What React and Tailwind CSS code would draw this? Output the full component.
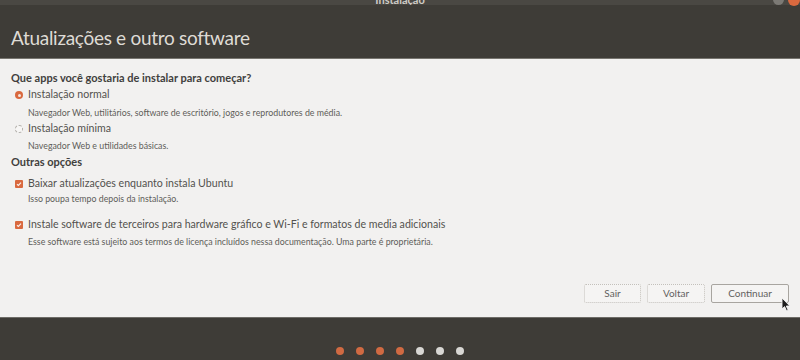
import React from "react";

const font = { fontFamily: "Lato, 'Noto Sans', sans-serif" };

function Radio({ checked }) {
  return checked ? (
    <span className="w-[8px] h-[8px] rounded-full bg-[#d9693f] flex items-center justify-center shrink-0">
      <span className="w-[3px] h-[3px] rounded-full bg-[#f6e6de]" />
    </span>
  ) : (
    <span className="w-[8px] h-[8px] rounded-full border border-dashed border-[#b3b0ab] bg-[#f7f6f5] shrink-0" />
  );
}

function Check() {
  return (
    <span className="w-[8px] h-[8px] rounded-[1px] bg-[#d9693f] flex items-center justify-center shrink-0">
      <svg width="6" height="6" viewBox="0 0 6 6">
        <path d="M1 3.2 L2.4 4.5 L5 1.6" stroke="#fbeee8" strokeWidth="1.2" fill="none" />
      </svg>
    </span>
  );
}

function Btn({ w, label, strong }) {
  return (
    <button
      className={
        "h-[19px] rounded-[2px] border bg-[#f5f4f3] text-[10px] text-[#63625f] flex items-center justify-center " +
        (strong ? "border-[#a8a5a0] border-solid" : "border-[#c3c0bb] border-dotted")
      }
      style={{ width: w }}
    >
      {label}
    </button>
  );
}

export default function App() {
  return (
    <div className="w-[800px] h-[360px] flex flex-col bg-[#f2f1f0] relative overflow-hidden" style={font}>
      {/* cabeçalho */}
      <header className="h-[59px] bg-[#3e3c37] border-b border-[#77756f] relative shrink-0">
        <div className="h-[5px] bg-[#4a4843] overflow-hidden flex justify-center">
          <span className="text-[11px] leading-[11px] -mt-[6px] text-[#cfccc6] font-bold">Instalação</span>
        </div>
        <span className="absolute -top-[6px] left-[773px] w-[11px] h-[11px] rounded-full bg-[#7c7a75]" />
        <span className="absolute -top-[6px] left-[788px] w-[12px] h-[12px] rounded-full bg-[#d9693f]" />
        <h1 className="pl-[11px] pt-[22px] text-[19px] leading-[22px] text-[#dedbd5] tracking-[-0.3px]">
          Atualizações e outro software
        </h1>
      </header>

      <main className="flex-1 pt-[12px] flex flex-col">
        <div className="h-[14px] flex items-center pl-[11px] text-[11px] font-bold text-[#41403d]">
          Que apps você gostaria de instalar para começar?
        </div>
        <div className="h-[20px] flex items-center gap-[5px] pl-[15px] text-[10.6px] text-[#52514e]">
          <Radio checked />
          <span>Instalação normal</span>
        </div>
        <div className="h-[16px] flex items-center pl-[28px] text-[8.8px] text-[#5e5d59]">
          Navegador Web, utilitários, software de escritório, jogos e reprodutores de média.
        </div>
        <div className="h-[16px] flex items-center gap-[5px] pl-[15px] text-[10.6px] text-[#52514e]">
          <Radio />
          <span>Instalação mínima</span>
        </div>
        <div className="h-[18px] flex items-center pl-[28px] text-[8.8px] text-[#5e5d59]">
          Navegador Web e utilidades básicas.
        </div>
        <div className="h-[14px] flex items-center pl-[11px] text-[11px] font-bold text-[#41403d]">
          Outras opções
        </div>
        <div className="mt-[7px] h-[16px] flex items-center gap-[5px] pl-[15px] text-[10.6px] text-[#52514e]">
          <Check />
          <span>Baixar atualizações enquanto instala Ubuntu</span>
        </div>
        <div className="h-[14px] flex items-center pl-[28px] text-[8.8px] text-[#5e5d59]">
          Isso poupa tempo depois da instalação.
        </div>
        <div className="mt-[11px] h-[16px] flex items-center gap-[5px] pl-[15px] text-[10.6px] text-[#52514e]">
          <Check />
          <span>Instale software de terceiros para hardware gráfico e Wi-Fi e formatos de media adicionais</span>
        </div>
        <div className="h-[18px] flex items-center pl-[28px] text-[8.8px] text-[#5e5d59]">
          Esse software está sujeito aos termos de licença incluídos nessa documentação. Uma parte é proprietária.
        </div>

        <div className="mt-[33px] flex justify-end gap-[6px] pr-[11px]">
          <Btn w={57} label="Sair" />
          <Btn w={58} label="Voltar" />
          <Btn w={78} label="Continuar" strong />
        </div>
      </main>

      {/* progresso */}
      <footer className="h-[43px] bg-[#3e3c37] border-t border-[#6e6c67] shrink-0 flex items-end justify-center gap-[12px] pb-[5px]">
        {[0, 1, 2, 3, 4, 5, 6].map((i) => (
          <span
            key={i}
            className={"w-[8px] h-[8px] rounded-full " + (i < 4 ? "bg-[#d06a42]" : "bg-[#d8d7d4]")}
          />
        ))}
      </footer>

      {/* cursor */}
      <svg className="absolute left-[781px] top-[297px]" width="10" height="15" viewBox="0 0 10 15">
        <path d="M1 1 L1 12 L3.6 9.6 L5.6 14 L7.2 13.3 L5.3 9 L8.8 9 Z" fill="#1d1d1d" stroke="#f4f4f4" strokeWidth="0.9" />
      </svg>
    </div>
  );
}
